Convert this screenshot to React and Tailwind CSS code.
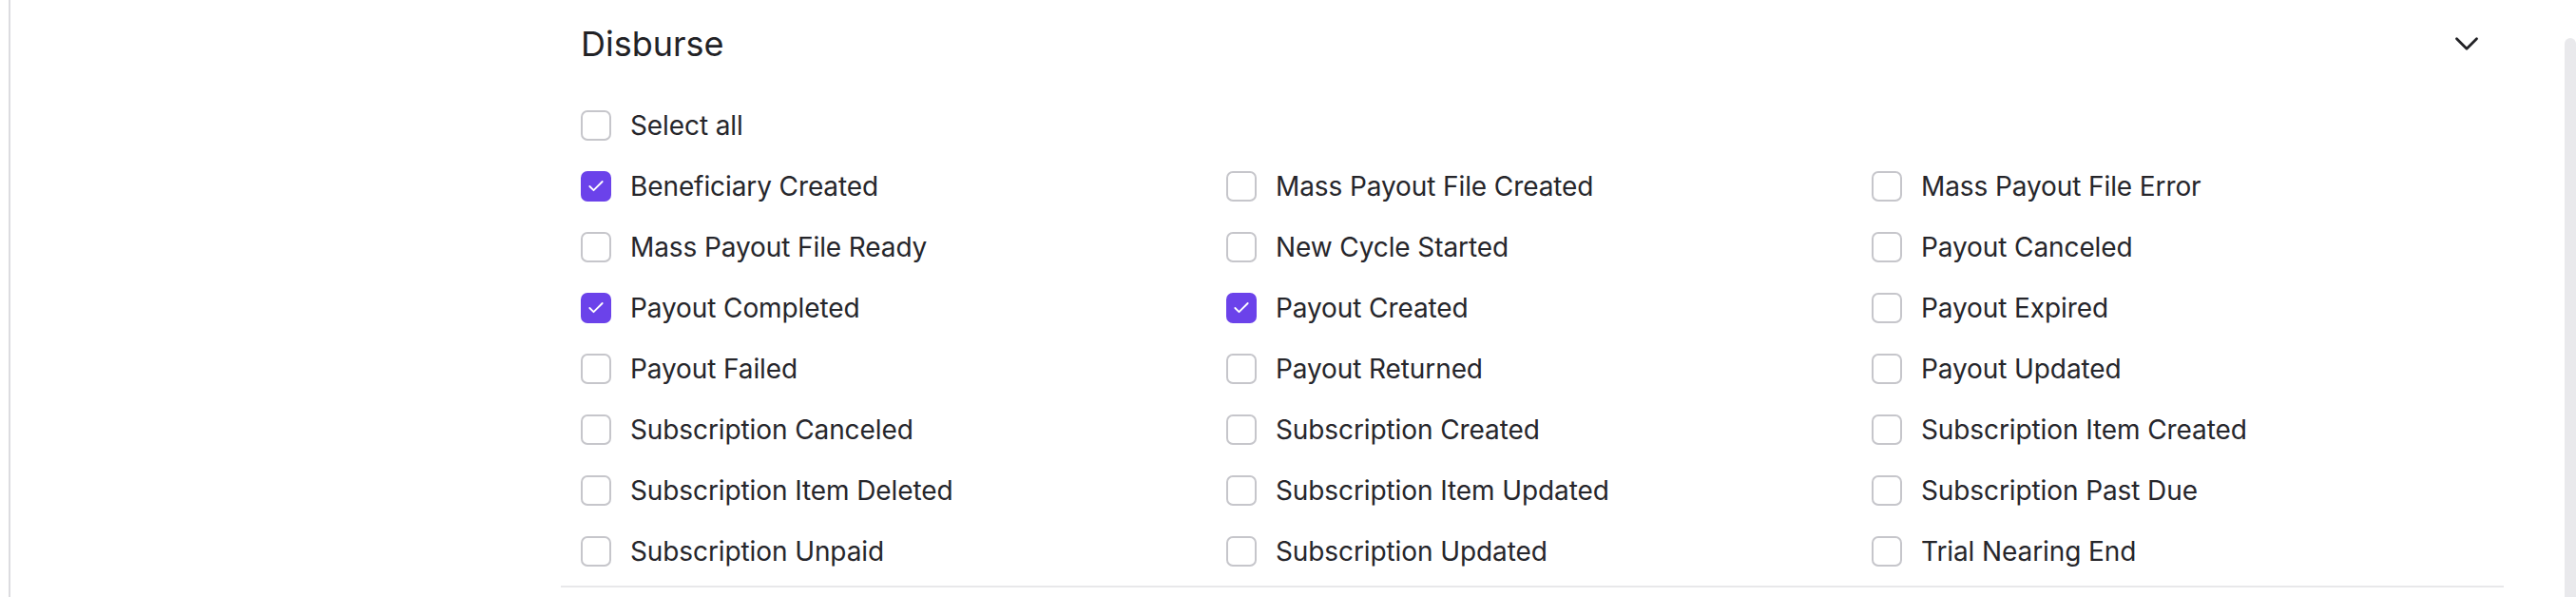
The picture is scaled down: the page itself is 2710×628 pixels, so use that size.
import { Check, ChevronDown } from "lucide-react";

const events = [
  { label: "Beneficiary Created", checked: true },
  { label: "Mass Payout File Created" },
  { label: "Mass Payout File Error" },
  { label: "Mass Payout File Ready" },
  { label: "New Cycle Started" },
  { label: "Payout Canceled" },
  { label: "Payout Completed", checked: true },
  { label: "Payout Created", checked: true },
  { label: "Payout Expired" },
  { label: "Payout Failed" },
  { label: "Payout Returned" },
  { label: "Payout Updated" },
  { label: "Subscription Canceled" },
  { label: "Subscription Created" },
  { label: "Subscription Item Created" },
  { label: "Subscription Item Deleted" },
  { label: "Subscription Item Updated" },
  { label: "Subscription Past Due" },
  { label: "Subscription Unpaid" },
  { label: "Subscription Updated" },
  { label: "Trial Nearing End" },
];

function CheckRow({ label, checked }) {
  return (
    <label className="flex items-center gap-[20px] h-[32px] cursor-pointer">
      {checked ? (
        <span className="flex items-center justify-center w-[32px] h-[32px] rounded-[7px] bg-[#6b42ea] shrink-0">
          <Check size={20} strokeWidth={2.2} className="text-white" />
        </span>
      ) : (
        <span className="w-[32px] h-[32px] rounded-[7px] border-2 border-[#c6c6cb] bg-white shrink-0" />
      )}
      <span className="text-[28px] leading-none tracking-[-0.1px] text-[#26262b]">{label}</span>
    </label>
  );
}

export default function App() {
  return (
    <div className="flex w-full h-[628px] bg-white overflow-hidden" style={{ fontFamily: "Inter, 'Noto Sans', sans-serif" }}>
      <div className="w-[9px] shrink-0" />
      <div className="w-[2px] shrink-0 bg-[#dcdce0]" />

      <main className="flex-1 pl-[579px]">
        {/* ---------- Disburse section ---------- */}
        <section className="w-[2044px] border-b-2 border-[#e8e8ea] px-[21px] pb-[20px]">
          <div className="flex items-center justify-between h-[92px]">
            <h2 className="text-[36px] font-normal text-[#222226]">Disburse</h2>
            <ChevronDown size={42} strokeWidth={1.6} className="text-[#222226] mr-[-3px]" />
          </div>

          <div className="mt-[24px] flex flex-col gap-[32px]">
            <CheckRow label="Select all" />
            <div className="grid grid-cols-3 gap-x-[35px] gap-y-[32px]">
              {events.map((e) => (
                <CheckRow key={e.label} label={e.label} checked={e.checked} />
              ))}
            </div>
          </div>
        </section>
      </main>

      <div className="w-[12px] shrink-0 mt-[40px] rounded-t-full bg-[#e9e9ec]" />
    </div>
  );
}
